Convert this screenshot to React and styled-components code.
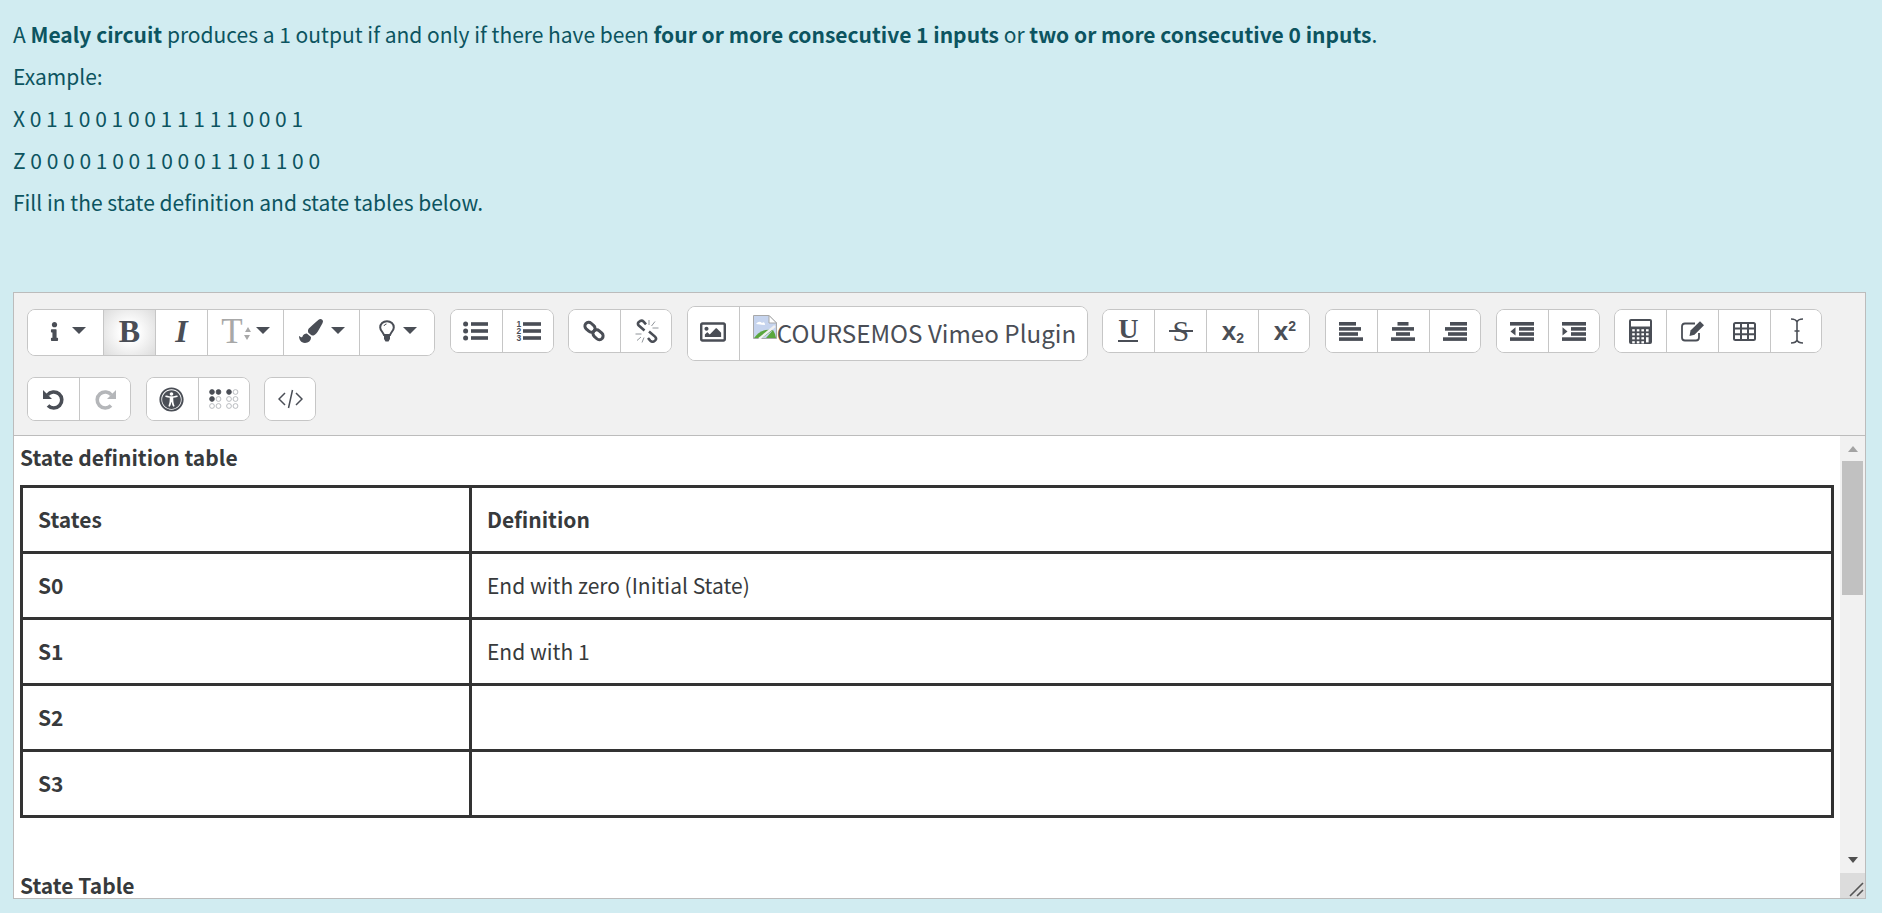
import React from "react";
import styled, { createGlobalStyle } from "styled-components";
import { FaInfo, FaPaintBrush, FaRegImage, FaUniversalAccess } from "react-icons/fa";

const SANS = `"Noto Sans CJK KR", "Noto Sans", sans-serif`;
const SERIF = `"Liberation Serif", serif`;
const ICON = "#4a4e56";

const GlobalStyle = createGlobalStyle`
  html, body {
    margin: 0;
    padding: 0;
    background: #d1ecf1;
    font-family: ${SANS};
    overflow: hidden;
  }
`;

function Caret() {
  return <CaretMark />;
}

function BulbIcon() {
  return (
    <svg width="16" height="22" viewBox="0 0 16 22" fill="none">
      <path
        d="M8 1.2C4 1.2 1.2 4 1.2 7.4C1.2 10.5 4 12 5 15H11C12 12 14.8 10.5 14.8 7.4C14.8 4 12 1.2 8 1.2z"
        stroke={ICON}
        strokeWidth="2"
      />
      <path d="M5 15.5h6v3.5l-1.5 2.5h-3L5 19z" fill={ICON} />
      <path d="M5 6Q5.5 4.2 7.5 4" stroke={ICON} strokeWidth="1" />
    </svg>
  );
}

function BulletsIcon() {
  return (
    <svg width="25" height="20" viewBox="0 0 25 20" fill={ICON}>
      {[0, 1, 2].map((i) => (
        <g key={i}>
          <circle cx="2.6" cy={3 + i * 7} r="2.5" />
          <rect x="8" y={1.2 + i * 7} width="17" height="3.6" />
        </g>
      ))}
    </svg>
  );
}

function NumbersIcon() {
  return (
    <svg width="25" height="22" viewBox="0 0 25 22" fill={ICON}>
      {[0, 1, 2].map((i) => (
        <g key={i}>
          <NumberMark x="0.5" y={6.8 + i * 7}>
            {i + 1}
          </NumberMark>
          <rect x="7" y={2.2 + i * 7} width="18" height="3.6" />
        </g>
      ))}
    </svg>
  );
}

function LinkIcon() {
  return (
    <svg width="22" height="22" viewBox="0 0 22 22" fill="none" stroke={ICON} strokeWidth="3">
      <rect x="1.5" y="3.5" width="11" height="7.5" rx="3.7" transform="rotate(42 7 7.2)" />
      <rect x="9.5" y="11" width="11" height="7.5" rx="3.7" transform="rotate(42 15 14.8)" />
    </svg>
  );
}

function UnlinkIcon() {
  return (
    <svg width="24" height="24" viewBox="0 0 24 24" fill="none">
      <path d="M9.5 11.5L3.8 6.6Q2 4.6 3.8 3L5.2 2Q7 1 8.6 2.6L11 5.4" stroke={ICON} strokeWidth="2.6" />
      <path d="M14 12.5L20 17.6Q22 19.6 20.2 21.4L19 22.4Q17 23.4 15.2 21.6L13 19" stroke={ICON} strokeWidth="2.6" />
      <path d="M14 1v5M20 2.5l-3.5 4.5M23.5 9h-6M0.5 15h6M2 21.5l4-3.5M9 18.5l-2 5" stroke="#8f9499" strokeWidth="1" />
    </svg>
  );
}

function AlignIcon({ bars }) {
  return (
    <svg width="24" height="19" viewBox="0 0 24 19" fill={ICON}>
      {bars.map(([x, w], i) => (
        <rect key={i} x={x} y={i * 5.1} width={w} height="3.6" />
      ))}
    </svg>
  );
}

function IndentIcon({ out }) {
  return (
    <svg width="24" height="19" viewBox="0 0 24 19" fill={ICON}>
      <rect x="0" y="0" width="24" height="3.6" />
      <rect x="9" y="5.1" width="15" height="3.6" />
      <rect x="9" y="10.2" width="15" height="3.6" />
      <rect x="0" y="15.3" width="24" height="3.6" />
      <path d={out ? "M5.5 5.2v8.4L0.5 9.4z" : "M0.5 5.2v8.4L5.5 9.4z"} />
    </svg>
  );
}

function CalculatorIcon() {
  const keys = [];
  for (let r = 0; r < 4; r++) {
    for (let c = 0; c < 4; c++) {
      if (c === 3 && r > 1) continue;
      keys.push(<rect key={`${r}-${c}`} x={3.2 + c * 4.6} y={10.2 + r * 4} width="2.6" height="2.2" />);
    }
  }
  return (
    <svg width="23" height="25" viewBox="0 0 23 25">
      <rect x="0" y="0" width="23" height="25" rx="2" fill={ICON} />
      <rect x="2" y="2" width="19" height="5.5" fill="#fff" />
      <g fill="#fff">
        {keys}
        <rect x="17" y="18.2" width="2.6" height="5.2" />
      </g>
    </svg>
  );
}

function EditIcon() {
  return (
    <svg width="25" height="22" viewBox="0 0 25 22" fill="none">
      <path d="M15 3.5H5Q2 3.5 2 6.5V17.5Q2 20.5 5 20.5H16Q19 20.5 19 17.5V13" stroke={ICON} strokeWidth="1.8" />
      <path d="M10.5 10.5L20 1.2L24 5.2L14.5 14.8L9.5 16z" fill={ICON} />
    </svg>
  );
}

function TableIcon() {
  return (
    <svg width="23" height="19" viewBox="0 0 23 19" fill="none" stroke={ICON} strokeWidth="2">
      <rect x="1" y="1" width="21" height="17" rx="1.5" />
      <path d="M1 6.5H22M1 12.2H22M8 1V18M15 1V18" />
    </svg>
  );
}

function CursorIcon() {
  return (
    <svg width="14" height="26" viewBox="0 0 14 26" fill="none" stroke={ICON} strokeWidth="1.6">
      <path d="M1 1Q6 1 7 4Q8 1 13 1M7 4V22M1 25Q6 25 7 22Q8 25 13 25M4.5 13H9.5" />
    </svg>
  );
}

function TurnIcon({ mirrored }) {
  return (
    <TurnSvg $mirrored={mirrored} width="22" height="22" viewBox="0 0 22 22" fill="none">
      <path d="M5.5 7A8 8 0 1 1 6 17.5" stroke="currentColor" strokeWidth="3.6" />
      <path d="M1 2V11H10z" fill="currentColor" />
    </TurnSvg>
  );
}

function BrailleIcon() {
  const dots = [
    [1, 1, 1, 0],
    [1, 0, 0, 0],
    [0, 0, 0, 0],
  ];
  return (
    <svg width="30" height="20" viewBox="0 0 30 20">
      {dots.map((row, r) =>
        row.map((on, c) => (
          <circle
            key={`${r}-${c}`}
            cx={3 + c * 6.5 + (c > 1 ? 4 : 0)}
            cy={3 + r * 7}
            r="2.4"
            fill={on ? ICON : "#fff"}
            stroke={on ? ICON : "#a9adb2"}
            strokeWidth="0.8"
          />
        ))
      )}
    </svg>
  );
}

function CodeIcon() {
  return (
    <svg width="25" height="20" viewBox="0 0 25 20" fill="none" stroke={ICON} strokeWidth="1.5">
      <path d="M7 4L1 10L7 16M18 4L24 10L18 16M14.5 1L10.5 19" />
    </svg>
  );
}

function BrokenImage() {
  return (
    <BrokenSvg width="24" height="24" viewBox="0 0 24 24">
      <path d="M0.5 0.5H16L23.5 8V23.5H0.5z" fill="#c6d4ee" stroke="#a8a8a8" />
      <path d="M16 0.5V8H23.5z" fill="#fff" stroke="#a8a8a8" />
      <path d="M3 9Q6 5 9 8Q12 6 12 10z" fill="#fff" />
      <path d="M1 23Q8 13 20 15L9 23z" fill="#5aa63c" />
      <path d="M20 15Q22 18 23 23L13 23z" fill="#5aa63c" />
      <path d="M6 24L22 11" stroke="#f1f1f1" strokeWidth="2.4" />
    </BrokenSvg>
  );
}

export default function App() {
  return (
    <Page>
      <GlobalStyle />
      <Question>
        <p>
          A <b>Mealy circuit</b> produces a 1 output if and only if there have been{" "}
          <b>four or more consecutive 1 inputs</b> or <b>two or more consecutive 0 inputs</b>.
        </p>
        <p>Example:</p>
        <p>X 0 1 1 0 0 1 0 0 1 1 1 1 1 0 0 0 1</p>
        <p>Z 0 0 0 0 1 0 0 1 0 0 0 1 1 0 1 1 0 0</p>
        <p>Fill in the state definition and state tables below.</p>
      </Question>

      <Editor>
        <Toolbar>
          <Group $first>
            <ToolButton $width={76}>
              <FaInfo size={19} />
              <Caret />
            </ToolButton>
            <ToolButton $active>
              <SerifGlyph $bold>B</SerifGlyph>
            </ToolButton>
            <ToolButton>
              <SerifGlyph $bold $italic>I</SerifGlyph>
            </ToolButton>
            <ToolButton $width={76}>
              <SizeGlyph>
                T
                <SizeArrows />
              </SizeGlyph>
              <Caret />
            </ToolButton>
            <ToolButton $width={76}>
              <FaPaintBrush size={24} />
              <Caret />
            </ToolButton>
            <ToolButton $width={76}>
              <BulbIcon />
              <Caret />
            </ToolButton>
          </Group>

          <Group>
            <ToolButton>
              <BulletsIcon />
            </ToolButton>
            <ToolButton>
              <NumbersIcon />
            </ToolButton>
          </Group>

          <Group>
            <ToolButton>
              <LinkIcon />
            </ToolButton>
            <ToolButton>
              <UnlinkIcon />
            </ToolButton>
          </Group>

          <Group $tall>
            <ToolButton>
              <FaRegImage size={26} />
            </ToolButton>
            <ToolButton $width={349}>
              <PluginLabel>
                <BrokenImage />
                COURSEMOS Vimeo Plugin
              </PluginLabel>
            </ToolButton>
          </Group>

          <Group>
            <ToolButton>
              <UnderGlyph>U</UnderGlyph>
            </ToolButton>
            <ToolButton>
              <StrikeGlyph>S</StrikeGlyph>
            </ToolButton>
            <ToolButton>
              <ScriptGlyph>
                x<Low>2</Low>
              </ScriptGlyph>
            </ToolButton>
            <ToolButton>
              <ScriptGlyph>
                x<High>2</High>
              </ScriptGlyph>
            </ToolButton>
          </Group>

          <Group>
            <ToolButton>
              <AlignIcon bars={[[0, 17], [0, 22], [0, 19], [0, 24]]} />
            </ToolButton>
            <ToolButton>
              <AlignIcon bars={[[6.5, 11], [1, 22], [5, 14], [0, 24]]} />
            </ToolButton>
            <ToolButton>
              <AlignIcon bars={[[7, 17], [2, 22], [5, 19], [0, 24]]} />
            </ToolButton>
          </Group>

          <Group>
            <ToolButton>
              <IndentIcon out />
            </ToolButton>
            <ToolButton>
              <IndentIcon />
            </ToolButton>
          </Group>

          <Group>
            <ToolButton>
              <CalculatorIcon />
            </ToolButton>
            <ToolButton>
              <EditIcon />
            </ToolButton>
            <ToolButton>
              <TableIcon />
            </ToolButton>
            <ToolButton>
              <CursorIcon />
            </ToolButton>
          </Group>

          <Group>
            <ToolButton>
              <TurnIcon />
            </ToolButton>
            <ToolButton $muted>
              <TurnIcon mirrored />
            </ToolButton>
          </Group>

          <Group>
            <ToolButton>
              <FaUniversalAccess size={25} />
            </ToolButton>
            <ToolButton>
              <BrailleIcon />
            </ToolButton>
          </Group>

          <Group>
            <ToolButton>
              <CodeIcon />
            </ToolButton>
          </Group>
        </Toolbar>

        <Body>
          <Content>
            <Heading>State definition table</Heading>
            <StateTable>
              <colgroup>
                <col style={{ width: 449 }} />
                <col />
              </colgroup>
              <tbody>
                <tr>
                  <HeadCell>States</HeadCell>
                  <HeadCell>Definition</HeadCell>
                </tr>
                <tr>
                  <HeadCell>S0</HeadCell>
                  <Cell>End with zero (Initial State)</Cell>
                </tr>
                <tr>
                  <HeadCell>S1</HeadCell>
                  <Cell>End with 1</Cell>
                </tr>
                <tr>
                  <HeadCell>S2</HeadCell>
                  <Cell />
                </tr>
                <tr>
                  <HeadCell>S3</HeadCell>
                  <Cell />
                </tr>
              </tbody>
            </StateTable>
            <NextHeading>State Table</NextHeading>
          </Content>

          <ScrollColumn>
            <ScrollTrack>
              <ArrowUp />
              <Thumb />
              <ArrowDown />
            </ScrollTrack>
            <Resizer>
              <svg width="16" height="16" viewBox="0 0 16 16" stroke="#555" strokeWidth="1.6">
                <path d="M2 15L15 2M9 15L15 9" />
              </svg>
            </Resizer>
          </ScrollColumn>
        </Body>
      </Editor>
    </Page>
  );
}

const Page = styled.div`
  width: 1882px;
  height: 913px;
  box-sizing: border-box;
  padding: 13px 16px 0 13px;
`;

const Question = styled.div`
  height: 279px;
  color: #0c5460;
  font-size: 21px;
  line-height: 42px;

  & p {
    margin: 0;
  }
  & b {
    font-weight: 700;
  }
`;

const Editor = styled.div`
  height: 607px;
  box-sizing: border-box;
  border: 1px solid #bcbcbc;
  background: #fff;
  display: flex;
  flex-direction: column;
`;

const Toolbar = styled.div`
  display: flex;
  flex-wrap: wrap;
  align-items: flex-start;
  column-gap: 14.6px;
  row-gap: 13px;
  padding: 13px 13px 14px;
  background: #f1f1f1;
  border-bottom: 1px solid #bcbcbc;
`;

const Group = styled.div`
  display: flex;
  height: ${(p) => (p.$tall ? "55px" : p.$first ? "47px" : "44px")};
  margin-top: ${(p) => (p.$tall ? "0" : "3px")};
  box-sizing: border-box;
  border: 1px solid #c6c6c6;
  border-radius: 8px;
  background: #fff;
  overflow: hidden;

  & > div {
    padding-bottom: ${(p) => (p.$tall ? "4px" : p.$first ? "3px" : "0")};
  }
`;

const ToolButton = styled.div`
  flex: none;
  width: ${(p) => p.$width || 52}px;
  box-sizing: border-box;
  display: flex;
  align-items: center;
  justify-content: center;
  gap: 8px;
  border-left: 1px solid #c6c6c6;
  color: ${(p) => (p.$muted ? "#b4b6b9" : ICON)};
  background: ${(p) => (p.$active ? "radial-gradient(circle, #fff 25%, #dcdcdc 100%)" : "#fff")};

  &:first-child {
    border-left: 0;
    margin-left: -1px;
  }
  &:last-child {
    margin-right: -1px;
  }
`;

const CaretMark = styled.span`
  width: 0;
  height: 0;
  border-left: 7.5px solid transparent;
  border-right: 7.5px solid transparent;
  border-top: 7.5px solid ${ICON};
  margin-top: -2px;
`;

const NumberMark = styled.text`
  font-family: "Liberation Sans", sans-serif;
  font-size: 8.5px;
  font-weight: 700;
`;

const TurnSvg = styled.svg`
  transform: ${(p) => (p.$mirrored ? "scaleX(-1)" : "none")};
`;

const SerifGlyph = styled.span`
  font-family: ${SERIF};
  font-size: 32px;
  line-height: 1;
  font-weight: ${(p) => (p.$bold ? 700 : 400)};
  font-style: ${(p) => (p.$italic ? "italic" : "normal")};
`;

const SizeGlyph = styled.span`
  position: relative;
  font-family: ${SERIF};
  font-size: 35px;
  line-height: 1;
  color: #a8a8a8;
  margin-right: 5px;
`;

const SizeArrows = styled.span`
  position: absolute;
  right: -8px;
  top: 13px;
  width: 0;
  height: 0;
  border-left: 3.5px solid transparent;
  border-right: 3.5px solid transparent;
  border-bottom: 5px solid #a8a8a8;

  &::after {
    content: "";
    position: absolute;
    left: -3.5px;
    top: 8px;
    border-left: 3.5px solid transparent;
    border-right: 3.5px solid transparent;
    border-top: 5px solid #a8a8a8;
  }
`;

const UnderGlyph = styled.span`
  font-family: ${SERIF};
  font-size: 28px;
  font-weight: 700;
  line-height: 22px;
  border-bottom: 2px solid ${ICON};
  margin-top: -2px;
`;

const StrikeGlyph = styled.span`
  position: relative;
  font-family: ${SERIF};
  font-size: 30px;
  line-height: 1;
  margin-top: -1px;

  &::after {
    content: "";
    position: absolute;
    left: -4px;
    right: -4px;
    top: 14px;
    height: 2px;
    background: ${ICON};
  }
`;

const ScriptGlyph = styled.span`
  font-family: "Liberation Sans", sans-serif;
  font-size: 26px;
  font-weight: 700;
  line-height: 1;
`;

const Low = styled.span`
  font-size: 14px;
  vertical-align: -3px;
`;

const High = styled.span`
  font-size: 14px;
  vertical-align: 9px;
`;

const PluginLabel = styled.span`
  width: 100%;
  box-sizing: border-box;
  padding-left: 13px;
  margin-top: 3px;
  font-family: ${SANS};
  font-size: 24.2px;
  line-height: 40px;
  white-space: nowrap;
`;

const BrokenSvg = styled.svg`
  vertical-align: 4px;
`;

const Body = styled.div`
  flex: 1;
  min-height: 0;
  display: flex;
`;

const Content = styled.div`
  flex: 1;
  min-width: 0;
  overflow: hidden;
  padding-left: 6px;
  color: #373a3c;
  font-size: 21px;
  line-height: 42px;
`;

const Heading = styled.div`
  font-weight: 700;
  margin-bottom: 7px;
`;

const NextHeading = styled(Heading)`
  margin: 46px 0 0;
`;

const StateTable = styled.table`
  width: 1814px;
  table-layout: fixed;
  border-collapse: collapse;
  border: 3px solid #333;
`;

const Cell = styled.td`
  height: 66px;
  box-sizing: border-box;
  border: 3px solid #333;
  padding: 0 15px 2px;
`;

const HeadCell = styled(Cell)`
  font-weight: 700;
`;

const ScrollColumn = styled.div`
  flex: none;
  width: 25px;
  display: flex;
  flex-direction: column;
`;

const ScrollTrack = styled.div`
  flex: 1;
  display: flex;
  flex-direction: column;
  align-items: center;
  background: #f1f1f1;
  padding: 10px 0;
`;

const ArrowUp = styled.span`
  width: 0;
  height: 0;
  border-left: 5.5px solid transparent;
  border-right: 5.5px solid transparent;
  border-bottom: 6px solid #a3a3a3;
`;

const ArrowDown = styled.span`
  width: 0;
  height: 0;
  margin-top: auto;
  border-left: 5.5px solid transparent;
  border-right: 5.5px solid transparent;
  border-top: 6px solid #505050;
`;

const Thumb = styled.div`
  width: 21px;
  height: 134px;
  margin-top: 9px;
  background: #c1c1c1;
`;

const Resizer = styled.div`
  height: 25px;
  flex: none;
  display: flex;
  align-items: flex-end;
  justify-content: flex-end;
  padding: 0 1px 1px 0;
  box-sizing: border-box;
  background: #dcdcdc;
`;
